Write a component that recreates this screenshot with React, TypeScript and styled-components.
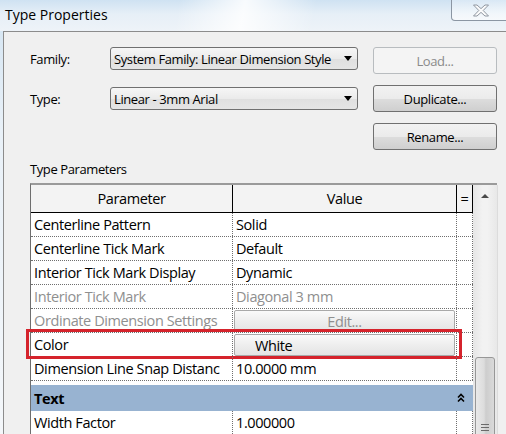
import React from "react";
import styled, { createGlobalStyle } from "styled-components";

const GlobalStyle = createGlobalStyle`
  html, body {
    margin: 0;
    padding: 0;
    overflow: hidden;
  }
  body {
    font-family: "Open Sans", "Noto Sans", sans-serif;
    color: #000;
  }
`;

const Window = styled.div`
  width: 506px;
  height: 434px;
  display: flex;
  flex-direction: column;
  overflow: hidden;
  background: linear-gradient(180deg, #d3e4f2 0%, #e9f1f8 30%, #f4f7fa 100%);
`;

const TitleBar = styled.div`
  height: 31px;
  flex-shrink: 0;
  display: flex;
  align-items: flex-start;
  background:
    linear-gradient(100deg, rgba(255, 255, 255, 0) 35%, rgba(255, 255, 255, 0.85) 48%, rgba(255, 255, 255, 0) 62%),
    linear-gradient(180deg, #cfe2f2 0%, #e6eff7 45%, #eef3f8 100%);
`;

const TitleText = styled.span`
  font-size: 14px;
  line-height: 14px;
  padding: 8px 0 0 5px;
  color: #000;
`;

const CloseButton = styled.div`
  margin-left: auto;
  margin-right: -4px;
  width: 57px;
  height: 20px;
  border: 1px solid #8b96a3;
  border-top: none;
  border-radius: 0 0 0 4px;
  display: flex;
  align-items: center;
  justify-content: center;
  background: linear-gradient(180deg, rgba(255, 255, 255, 0.2), rgba(255, 255, 255, 0.6));
`;

const Body = styled.div`
  flex: 1;
  margin-left: 3px;
  border-left: 1px solid #8c8c8c;
  border-top: 1px solid #8c8c8c;
  background: #f0f0f0;
  padding: 0 0 0 26px;
  font-size: 13px;
  letter-spacing: -0.4px;
  overflow: hidden;
`;

const TopSection = styled.div`
  display: flex;
  gap: 15px;
  padding-top: 15px;
`;

const Fields = styled.div`
  width: 328px;
  display: flex;
  flex-direction: column;
  gap: 17px;
`;

const FieldRow = styled.div`
  display: flex;
  align-items: center;
  height: 23px;
`;

const FieldLabel = styled.span`
  width: 80px;
`;

const Select = styled.div`
  flex: 1;
  height: 23px;
  box-sizing: border-box;
  border: 1px solid #707070;
  border-radius: 3px;
  background: linear-gradient(180deg, #f6f6f6 0%, #ebebeb 50%, #dfdfdf 51%, #e5e5e5 100%);
  display: flex;
  align-items: center;
  padding: 0 5px 0 3px;
`;

const SelectText = styled.span`
  flex: 1;
  white-space: nowrap;
`;

const Caret = styled.span`
  width: 0;
  height: 0;
  border-left: 4px solid transparent;
  border-right: 4px solid transparent;
  border-top: 5px solid #000;
`;

const Buttons = styled.div`
  width: 124px;
  display: flex;
  flex-direction: column;
  gap: 11px;
`;

const Button = styled.div<{ $disabled?: boolean }>`
  height: 27px;
  box-sizing: border-box;
  border: 1px solid ${(p) => (p.$disabled ? "#b8bcbf" : "#707070")};
  border-radius: 3px;
  display: flex;
  align-items: center;
  justify-content: center;
  color: ${(p) => (p.$disabled ? "#8a8a8a" : "#000")};
  background: ${(p) =>
    p.$disabled
      ? "#f4f4f4"
      : "linear-gradient(180deg, #f2f2f2 0%, #ebebeb 50%, #dddddd 51%, #cfcfcf 100%)"};
`;

const SectionLabel = styled.div`
  margin-top: 10px;
  height: 18px;
  line-height: 18px;
`;

const TableFrame = styled.div`
  margin-top: 5px;
  width: 466px;
  display: flex;
  border-top: 2px solid #9a9a9a;
  border-left: 1px solid #6e6e6e;
  font-size: 14.5px;
`;

const Grid = styled.div`
  width: 442px;
  display: flex;
  flex-direction: column;
  background: #fff;
`;

const HeaderRow = styled.div`
  display: grid;
  grid-template-columns: 202px 224px 16px;
  height: 28px;
  background: #f3f3f3;
  border-bottom: 1px solid #000;
  box-sizing: border-box;
`;

const HeaderCell = styled.div`
  display: flex;
  align-items: center;
  justify-content: center;
  border-right: 1px solid #000;
`;

const Row = styled.div`
  position: relative;
  display: grid;
  grid-template-columns: 202px 224px 16px;
  height: 24px;
  box-sizing: border-box;
  border-bottom: 1px dotted #6f6f6f;
`;

const Cell = styled.div<{ $muted?: boolean }>`
  display: flex;
  align-items: center;
  padding-left: 3px;
  border-right: 1px dotted #6f6f6f;
  white-space: nowrap;
  overflow: hidden;
  color: ${(p) => (p.$muted ? "#8f8f8f" : "#000")};
`;

const ValueButton = styled.div<{ $muted?: boolean; $center?: boolean }>`
  flex: 1;
  align-self: stretch;
  margin: 1px 1px 0 -2px;
  box-sizing: border-box;
  border: 1px solid #a9a9a9;
  border-radius: 2px;
  display: flex;
  align-items: center;
  justify-content: ${(p) => (p.$center ? "center" : "flex-start")};
  padding-left: ${(p) => (p.$center ? "0" : "20px")};
  color: ${(p) => (p.$muted ? "#8f8f8f" : "#000")};
  background: linear-gradient(180deg, #fafafa 0%, #eeeeee 50%, #e4e4e4 100%);
`;

/* red annotation frame drawn over a parameter row */
const Highlight = styled.div`
  position: absolute;
  top: -4px;
  bottom: -3px;
  left: -5px;
  right: 11px;
  border: 3px solid #d5232c;
  pointer-events: none;
`;

const GroupRow = styled.div`
  display: flex;
  align-items: center;
  height: 26px;
  margin-top: 4px;
  background: #98b3d1;
  padding: 0 8px 0 3px;
  font-weight: 700;
`;

const GroupToggle = styled.span`
  margin-left: auto;
  display: flex;
`;

const Scrollbar = styled.div`
  width: 24px;
  flex-shrink: 0;
  display: flex;
  flex-direction: column;
  align-items: center;
  border-right: 1px solid #dcdcdc;
  background: linear-gradient(90deg, #e6e6e6 0%, #f2f2f2 40%, #f2f2f2 60%, #e8e8e8 100%);
`;

const ArrowUp = styled.span`
  margin-top: 9px;
  width: 0;
  height: 0;
  border-left: 4px solid transparent;
  border-right: 4px solid transparent;
  border-bottom: 4px solid #4a4a4a;
`;

const Thumb = styled.div`
  margin-top: 159px;
  width: 20px;
  height: 90px;
  box-sizing: border-box;
  border: 1px solid #979797;
  border-radius: 3px;
  background: linear-gradient(90deg, #e9e9e9 0%, #dcdcdc 45%, #cdcdcd 55%, #dadada 100%);
  display: flex;
  flex-direction: column;
  align-items: center;
  padding-top: 66px;
  gap: 2px;
`;

const Grip = styled.span`
  width: 8px;
  height: 1px;
  background: #6a6a6a;
`;

type Param = {
  name: string;
  value: string;
  muted?: boolean;
  button?: boolean;
  highlight?: boolean;
};

const params: Param[] = [
  { name: "Centerline Pattern", value: "Solid" },
  { name: "Centerline Tick Mark", value: "Default" },
  { name: "Interior Tick Mark Display", value: "Dynamic" },
  { name: "Interior Tick Mark", value: "Diagonal 3 mm", muted: true },
  { name: "Ordinate Dimension Settings", value: "Edit...", muted: true, button: true },
  { name: "Color", value: "White", button: true, highlight: true },
  { name: "Dimension Line Snap Distanc", value: "10.0000 mm" },
];

const CloseGlyph = () => (
  <svg width="18" height="13" viewBox="0 0 18 13">
    <path
      d="M1.5 1 H5 L9 4.6 L13 1 H16.5 L11.2 6.5 L16.5 12 H13 L9 8.4 L5 12 H1.5 L6.8 6.5 Z"
      fill="#fbfbfb"
      stroke="#8e96a0"
      strokeWidth="1"
      strokeLinejoin="round"
    />
  </svg>
);

const Collapse = () => (
  <svg width="8" height="10" viewBox="0 0 8 10">
    <path d="M1 4.5 L4 1.5 L7 4.5 M1 8.5 L4 5.5 L7 8.5" fill="none" stroke="#000" strokeWidth="1.6" />
  </svg>
);

const ParamRow = ({ p }: { p: Param }) => (
  <Row>
    <Cell $muted={p.muted}>{p.name}</Cell>
    <Cell $muted={p.muted}>
      {p.button ? (
        <ValueButton $muted={p.muted} $center={p.muted}>
          {p.value}
        </ValueButton>
      ) : (
        p.value
      )}
    </Cell>
    <Cell />
    {p.highlight && <Highlight />}
  </Row>
);

export default function App() {
  return (
    <>
      <GlobalStyle />
      <Window>
        <TitleBar>
          <TitleText>Type Properties</TitleText>
          <CloseButton>
            <CloseGlyph />
          </CloseButton>
        </TitleBar>
        <Body>
          <TopSection>
            <Fields>
              <FieldRow>
                <FieldLabel>Family:</FieldLabel>
                <Select>
                  <SelectText>System Family: Linear Dimension Style</SelectText>
                  <Caret />
                </Select>
              </FieldRow>
              <FieldRow>
                <FieldLabel>Type:</FieldLabel>
                <Select>
                  <SelectText>Linear - 3mm Arial</SelectText>
                  <Caret />
                </Select>
              </FieldRow>
            </Fields>
            <Buttons>
              <Button $disabled>Load...</Button>
              <Button>Duplicate...</Button>
              <Button>Rename...</Button>
            </Buttons>
          </TopSection>
          <SectionLabel>Type Parameters</SectionLabel>
          <TableFrame>
            <Grid>
              <HeaderRow>
                <HeaderCell>Parameter</HeaderCell>
                <HeaderCell>Value</HeaderCell>
                <HeaderCell>=</HeaderCell>
              </HeaderRow>
              {params.map((p) => (
                <ParamRow key={p.name} p={p} />
              ))}
              <GroupRow>
                Text
                <GroupToggle>
                  <Collapse />
                </GroupToggle>
              </GroupRow>
              <ParamRow p={{ name: "Width Factor", value: "1.000000" }} />
            </Grid>
            <Scrollbar>
              <ArrowUp />
              <Thumb>
                <Grip />
                <Grip />
                <Grip />
              </Thumb>
            </Scrollbar>
          </TableFrame>
        </Body>
      </Window>
    </>
  );
}
